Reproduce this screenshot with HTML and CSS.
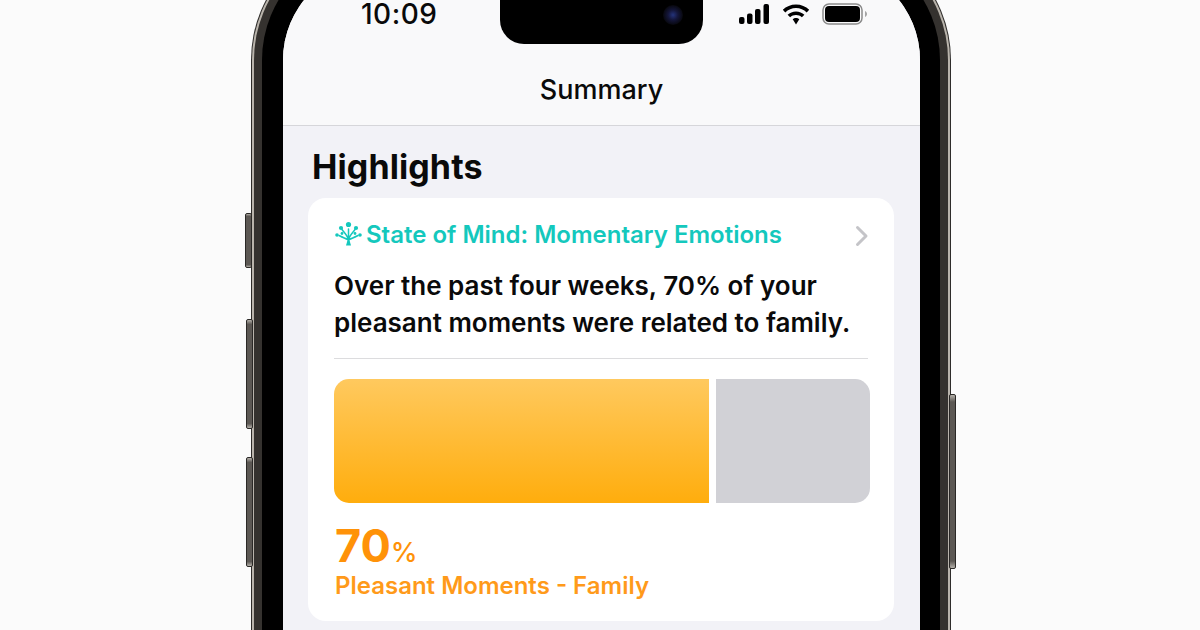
FILE: index.html
```html
<!DOCTYPE html>
<html lang="en">
<head>
  <meta charset="UTF-8" />
  <title>Summary</title>
  <link rel="stylesheet" href="styles.css">
</head>
<body>
  <div class="phone">
    <span class="side-btn btn-silent"></span>
    <span class="side-btn btn-up"></span>
    <span class="side-btn btn-down"></span>
    <span class="side-btn btn-power"></span>
    <div class="rim-light">
      <div class="rim-dark">
        <div class="bezel">
          <div class="screen">
            <div class="island"><span class="camera"></span></div>

            <div class="top-bar">
              <div class="status">
                <span class="time">10:09</span>
                <div class="status-icons">
                  <svg width="32" height="21" viewBox="0 0 32 21">
                    <rect x="1" y="13" width="5.5" height="7" rx="2" />
                    <rect x="9" y="9.5" width="5.5" height="10.5" rx="2" />
                    <rect x="17" y="5" width="5.5" height="15" rx="2" />
                    <rect x="25.5" y="0" width="5.5" height="20" rx="2" />
                  </svg>
                  <svg width="28" height="21" viewBox="0 0 28 21">
                    <path d="M14 0.5C8.8 0.5 4.2 2.5 0.8 5.8L3.3 8.4C6.1 5.7 9.9 4.1 14 4.1C18.1 4.1 21.9 5.7 24.7 8.4L27.2 5.8C23.8 2.5 19.2 0.5 14 0.5Z" />
                    <path d="M14 7.4C10.7 7.4 7.8 8.7 5.6 10.7L8.1 13.3C9.7 11.9 11.7 11 14 11C16.3 11 18.3 11.9 19.9 13.3L22.4 10.7C20.2 8.7 17.3 7.4 14 7.4Z" />
                    <path d="M14 14C12.8 14 11.6 14.5 10.7 15.3L14 20.5L17.3 15.3C16.4 14.5 15.2 14 14 14Z" />
                  </svg>
                  <svg width="46" height="22" viewBox="0 0 46 22">
                    <rect x="1" y="1" width="39" height="20" rx="6" class="batt-case" />
                    <rect x="3" y="3" width="35" height="16" rx="4" />
                    <path d="M43 8C44.2 8.5 45 9.6 45 11C45 12.4 44.2 13.5 43 14Z" class="batt-cap" />
                  </svg>
                </div>
              </div>
              <div class="nav-title">Summary</div>
            </div>

            <div class="content">
              <h1>Highlights</h1>
              <div class="card">
                <div class="card-head">
                  <svg class="mind-icon" width="27" height="26" viewBox="0 0 27 26">
                    <circle cx="13.5" cy="3.5" r="2.6" />
                    <circle cx="6" cy="7" r="2.1" />
                    <circle cx="21" cy="7" r="2.1" />
                    <circle cx="2" cy="14" r="1.8" />
                    <circle cx="25" cy="14" r="1.8" />
                    <circle cx="7" cy="12.5" r="1.4" />
                    <circle cx="20" cy="12.5" r="1.4" />
                    <path d="M13.5 8V23M13.5 19C13 15 9.5 12 7 8.5M13.5 19C14 15 17.5 12 20 8.5M13 18.5C10 17.5 7 16 4 14.5M14 18.5C17 17.5 20 16 23 14.5" />
                    <path d="M11 24.5L13.5 16L16 24.5Z" />
                  </svg>
                  <span class="card-title">State of Mind: Momentary Emotions</span>
                  <svg class="chevron" width="14" height="22" viewBox="0 0 14 22">
                    <path d="M2.5 2.5L11 11L2.5 19.5" />
                  </svg>
                </div>
                <p class="summary-text">Over the past four weeks, 70% of your pleasant moments were related to family.</p>
                <div class="divider"></div>
                <div class="bar">
                  <div class="bar-fill"></div>
                  <div class="bar-rest"></div>
                </div>
                <div class="stat"><span class="stat-num">70</span><span class="stat-unit">%</span></div>
                <div class="stat-label">Pleasant Moments - Family</div>
              </div>
            </div>
          </div>
        </div>
      </div>
    </div>
  </div>
</body>
</html>
```

FILE: styles.css
```css
html, body {
  height: 630px;
  overflow: hidden;
}

body {
  margin: 0;
  background: #fbfbfb;
  font-family: Inter, "Noto Sans", sans-serif;
  color: #0a0a0a;
}

/* the phone is taller than the picture, top and bottom are cut off */
.phone {
  position: relative;
  box-sizing: border-box;
  width: 700px;
  height: 720px;
  margin: -68px 0 0 251px;
  padding: 1px;
  border-radius: 128px 128px 0 0;
  background: #2e2c2a;
}

.rim-light {
  padding: 2px;
  height: 100%;
  box-sizing: border-box;
  border-radius: 127px 127px 0 0;
  background: #b9b4ac;
}

.rim-dark {
  padding: 8px;
  height: 100%;
  box-sizing: border-box;
  border-radius: 125px 125px 0 0;
  background: #35322f;
}

.bezel {
  padding: 21px 20px 0 21px;
  height: 100%;
  box-sizing: border-box;
  border-radius: 117px 117px 0 0;
  background: #000;
}

.screen {
  position: relative;
  height: 100%;
  border-radius: 96px 96px 0 0;
  overflow: hidden;
  background: #f2f2f7;
}

.side-btn {
  position: absolute;
  width: 7px;
  background: linear-gradient(180deg, #b5b1aa 0, #5c5854 4%, #5c5854 96%, #b5b1aa 100%);
  border: 1px solid #2b2927;
  border-radius: 2px;
  box-sizing: border-box;
}

.btn-silent { left: -6px; top: 281px; height: 55px; }
.btn-up { left: -5px; top: 387px; height: 110px; }
.btn-down { left: -5px; top: 525px; height: 110px; }
.btn-power { right: -5px; top: 462px; height: 175px; }

.island {
  position: absolute;
  left: 217px;
  top: 0;
  width: 203px;
  height: 80px;
  border-radius: 0 0 24px 24px;
  background: #000;
}

.camera {
  position: absolute;
  right: 20px;
  top: 41px;
  width: 20px;
  height: 20px;
  border-radius: 50%;
  background: radial-gradient(circle, #24337a 0, #14163a 35%, #060608 75%);
}

.top-bar {
  height: 161px;
  border-bottom: 1px solid #d6d6da;
  background: #f9f9fa;
}

.status {
  display: flex;
  justify-content: space-between;
  padding: 36px 52px 0 78px;
}

.time {
  font-size: 28px;
  font-weight: 500;
  line-height: 28px;
  letter-spacing: 0.5px;
}

.status-icons {
  display: flex;
  gap: 12px;
  align-items: center;
  height: 28px;
  fill: #000;
}

.batt-case {
  fill: none;
  stroke: #8a8a8a;
  stroke-width: 1.5;
}

.batt-cap {
  fill: #a5a5a5;
}

.nav-title {
  margin-top: 45px;
  text-align: center;
  font-size: 27px;
  font-weight: 500;
  line-height: 34px;
}

.content {
  padding: 19px 26px 0 25px;
}

h1 {
  margin: 0 0 9px 4px;
  font-size: 34px;
  font-weight: 700;
  line-height: 44px;
  letter-spacing: 0.1px;
}

.card {
  padding: 20px 24px 22px 26px;
  border-radius: 18px;
  background: #fff;
}

.card-head {
  display: flex;
  align-items: center;
  height: 32px;
}

.mind-icon {
  margin-left: 1px;
  fill: #14c8bd;
}

.mind-icon path:first-of-type {
  fill: none;
  stroke: #14c8bd;
  stroke-width: 1.5;
  stroke-linecap: round;
}

.card-title {
  margin-left: 4px;
  font-size: 24px;
  font-weight: 560;
  color: #14c8bd;
}

.chevron {
  margin: 4px 1px 0 auto;
  fill: none;
  stroke: #c4c4c8;
  stroke-width: 3;
  stroke-linecap: round;
  stroke-linejoin: round;
}

.summary-text {
  margin: 17px 0 0;
  font-size: 26px;
  font-weight: 560;
  line-height: 37px;
}

.divider {
  height: 1px;
  margin: 17px 2px 0 0;
  background: #dcdcde;
}

.bar {
  display: flex;
  gap: 7px;
  height: 124px;
  margin-top: 20px;
}

.bar-fill {
  width: 375px;
  border-radius: 15px 0 0 15px;
  background: linear-gradient(180deg, #ffc95e 0%, #ffad0d 100%);
}

.bar-rest {
  flex: 1;
  border-radius: 0 15px 15px 0;
  background: #d1d1d6;
}

.stat {
  display: flex;
  align-items: baseline;
  height: 54px;
  margin-top: 16px;
  color: #ff9208;
}

.stat-num {
  font-size: 45px;
  font-weight: 700;
  line-height: 54px;
  margin-left: 1px;
}

.stat-unit {
  font-size: 27px;
  font-weight: 500;
  line-height: 1;
}

.stat-label {
  margin-left: 1px;
  font-size: 24px;
  font-weight: 560;
  line-height: 26px;
  color: #ff9a1a;
}
```
